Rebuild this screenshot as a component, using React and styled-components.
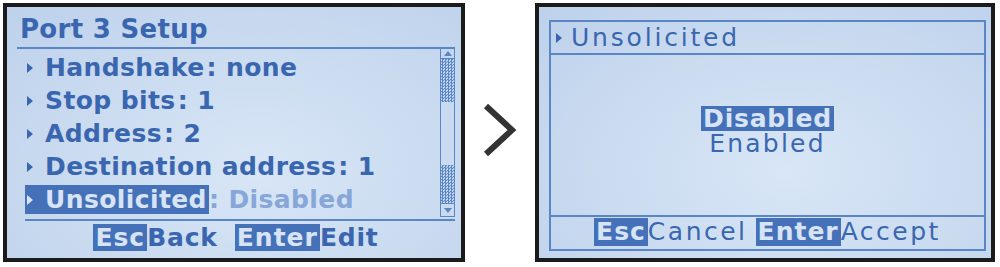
import React from 'react';
import styled, { createGlobalStyle } from 'styled-components';

const INK = '#3a66b0';
const LINE = '#5b86c6';
const HL_BG = '#4571b8';
const HL_INK = '#d8e4f5';

const GlobalStyle = createGlobalStyle`
  body {
    margin: 0;
    background: #fff;
    font-family: "DejaVu Sans", "Liberation Sans", sans-serif;
  }
`;

const Page = styled.div`
  display: flex;
  align-items: flex-start;
  width: 1000px;
  height: 267px;
  padding: 3px 0 0 3px;
  box-sizing: border-box;
`;

const Screen = styled.div`
  box-sizing: border-box;
  width: ${p => p.$width}px;
  height: 259px;
  border: 4px solid #1b1b1b;
  background: radial-gradient(ellipse at 55% 65%, #d8e6f6 0%, #cadbf0 55%, #bdd1eb 100%);
  color: ${INK};
  display: flex;
  flex-direction: column;
  padding: ${p => p.$pad};
`;

const Arrow = styled.div`
  width: 70px;
  height: 259px;
  display: flex;
  align-items: center;
  justify-content: center;
  svg { margin-top: -6px; }
`;

/* ---------- left screen ---------- */

const Title = styled.div`
  box-sizing: border-box;
  height: 42px;
  padding: 4px 0 0 3px;
  line-height: 36px;
  font-size: 26px;
  font-weight: bold;
  letter-spacing: 0.3px;
  border-bottom: 2px solid ${LINE};
`;

const ListArea = styled.div`
  box-sizing: border-box;
  display: flex;
  height: 172px;
  margin-left: 8px;
  border-bottom: 2px solid ${LINE};
`;

const Rows = styled.div`
  flex: 1;
  padding-top: 2px;
  font-size: 25px;
  font-weight: bold;
  line-height: 33px;
  letter-spacing: 0.4px;
`;

const Row = styled.div`
  white-space: nowrap;
`;

const Label = styled.span`
  padding: 0 2px;
  background: ${p => (p.$selected ? HL_BG : 'transparent')};
  color: ${p => (p.$selected ? HL_INK : 'inherit')};
`;

const Value = styled.span`
  color: ${p => (p.$muted ? '#86a7d8' : 'inherit')};
`;

const Marker = styled.span`
  display: inline-block;
  width: 0;
  height: 0;
  border-left: 6px solid currentColor;
  border-top: 5px solid transparent;
  border-bottom: 5px solid transparent;
  margin-right: ${p => p.$gap || 12}px;
  vertical-align: 3px;
`;

const ScrollBar = styled.div`
  box-sizing: border-box;
  width: 15px;
  height: 170px;
  margin-top: -2px;
  border: 1px solid ${LINE};
  display: flex;
  flex-direction: column;
`;

const ScrollButton = styled.div`
  height: ${p => p.$h}px;
  display: flex;
  align-items: center;
  justify-content: center;
  border-${p => (p.$down ? 'top' : 'bottom')}: 1px solid ${LINE};
  &::before {
    content: '';
    border-left: 4px solid transparent;
    border-right: 4px solid transparent;
    border-${p => (p.$down ? 'top' : 'bottom')}: 5px solid ${LINE};
  }
`;

const Thumb = styled.div`
  height: ${p => p.$h}px;
  background: repeating-conic-gradient(${LINE} 0 25%, #c2d5ee 0 50%) 0 0 / 3px 3px;
`;

const Track = styled.div`
  flex: 1;
`;

const Footer = styled.div`
  flex: 1;
  display: flex;
  justify-content: center;
  align-items: flex-start;
  padding-top: ${p => p.$top}px;
  font-size: 25px;
  font-weight: ${p => (p.$light ? 'normal' : 'bold')};
  letter-spacing: ${p => (p.$light ? 2.5 : 0.8)}px;
  white-space: nowrap;
`;

const Key = styled.span`
  background: ${HL_BG};
  color: ${HL_INK};
  font-weight: bold;
  letter-spacing: 1px;
  line-height: ${p => p.$h}px;
  padding: 0 2px;
`;

const Action = styled.span`
  line-height: ${p => p.$h}px;
  margin-right: ${p => p.$gap || 0}px;
`;

/* ---------- right screen ---------- */

const Frame = styled.div`
  flex: 1;
  display: flex;
  flex-direction: column;
  border: 2px solid ${LINE};
`;

const Header = styled.div`
  box-sizing: border-box;
  height: 33px;
  padding-left: 5px;
  line-height: 31px;
  font-size: 25px;
  letter-spacing: 2.8px;
  border-bottom: 2px solid ${LINE};
  white-space: nowrap;
`;

const Options = styled.div`
  flex: 1;
  display: flex;
  flex-direction: column;
  align-items: center;
  justify-content: center;
  padding-bottom: 8px;
  font-size: 25px;
`;

const Option = styled.div`
  line-height: 25px;
  padding: 0 2px;
  background: ${p => (p.$selected ? HL_BG : 'transparent')};
  color: ${p => (p.$selected ? HL_INK : 'inherit')};
  font-weight: ${p => (p.$selected ? 'bold' : 'normal')};
  letter-spacing: ${p => (p.$selected ? 0.8 : 2.2)}px;
`;

const RightFooter = styled(Footer)`
  flex: 0 0 34px;
  box-sizing: border-box;
  border-top: 2px solid ${LINE};
`;

const settings = [
  { label: 'Handshake', value: 'none' },
  { label: 'Stop bits', value: '1' },
  { label: 'Address', value: '2' },
  { label: 'Destination address', value: '1' },
  { label: 'Unsolicited', value: 'Disabled', selected: true },
];

export default function App() {
  return (
    <>
      <GlobalStyle />
      <Page>
        <Screen $width={462} $pad="0 6px 0 10px">
          <Title>Port 3 Setup</Title>
          <ListArea>
            <Rows>
              {settings.map(s => (
                <Row key={s.label}>
                  <Label $selected={s.selected}>
                    <Marker />
                    {s.label}
                  </Label>
                  <Value $muted={s.selected}>: {s.value}</Value>
                </Row>
              ))}
            </Rows>
            <ScrollBar>
              <ScrollButton $h={10} />
              <Thumb $h={43} />
              <Track />
              <Thumb $h={38} />
              <ScrollButton $h={12} $down />
            </ScrollBar>
          </ListArea>
          <Footer $top={3}>
            <Key $h={27}>Esc</Key>
            <Action $h={27} $gap={17}>Back</Action>
            <Key $h={27}>Enter</Key>
            <Action $h={27}>Edit</Action>
          </Footer>
        </Screen>

        <Arrow>
          <svg width="40" height="60" viewBox="0 0 40 60">
            <polyline points="6,6 32,30 6,54" fill="none" stroke="#333" strokeWidth="6" />
          </svg>
        </Arrow>

        <Screen $width={460} $pad="13px 5px 7px 10px">
          <Frame>
            <Header>
              <Marker $gap={9} />
              Unsolicited
            </Header>
            <Options>
              <Option $selected>Disabled</Option>
              <Option>Enabled</Option>
            </Options>
            <RightFooter $top={1} $light>
              <Key $h={28}>Esc</Key>
              <Action $h={28} $gap={8}>Cancel</Action>
              <Key $h={28}>Enter</Key>
              <Action $h={28}>Accept</Action>
            </RightFooter>
          </Frame>
        </Screen>
      </Page>
    </>
  );
}
